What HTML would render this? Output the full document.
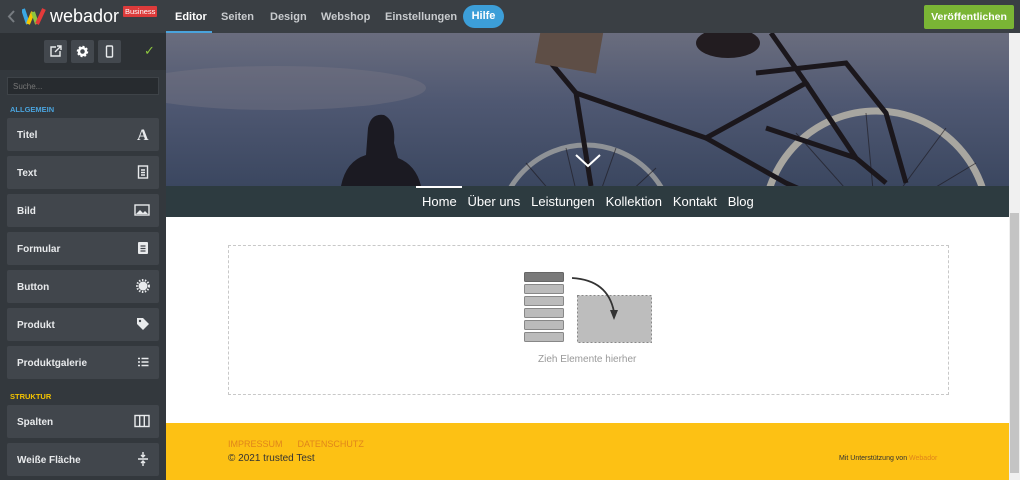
<!DOCTYPE html>
<html><head><meta charset="utf-8"><style>
*{margin:0;padding:0;box-sizing:border-box}
body{width:1020px;height:480px;overflow:hidden;font-family:"Liberation Sans",sans-serif;background:#fff;position:relative}
.top{position:absolute;left:0;top:0;width:1020px;height:33px;background:#3a3f44}
.top .nav{position:absolute;top:11px;font-size:11px;font-weight:bold;color:#c8cbce}
.side{position:absolute;left:0;top:33px;width:166px;height:447px;background:#33383d}
.tool{position:absolute;left:0;top:0;width:166px;height:37px;background:#2d3135}
.tb{position:absolute;top:7px;width:23px;height:23px;background:#43484e;border-radius:2px}
.item{position:absolute;left:7px;width:152px;height:33px;background:#41464c;border-radius:2px;font-size:10px;font-weight:bold;padding:12px 0 0 10px;color:#e8eaec}
.item svg{position:absolute;right:9px;top:9px}
.hdr{position:absolute;left:10px;font-size:7.5px;font-weight:bold}
.ic{fill:none;stroke:#e8eaec;stroke-width:1.4}
</style></head><body>
<div class="top">
<svg style="position:absolute;left:7px;top:10px" width="10" height="13"><path d="M7 1L2 6.5L7 12" stroke="#777c81" stroke-width="2" fill="none"/></svg>
<svg style="position:absolute;left:22px;top:8px" width="24" height="17"><path d="M1 1L6 16" stroke="#3aa7e3" stroke-width="4"/><path d="M6 16L11 4" stroke="#f5c400" stroke-width="4"/><path d="M11 4L15 16" stroke="#8bc53f" stroke-width="4"/><path d="M15 16L22 1" stroke="#e33a3a" stroke-width="4"/></svg>
<div style="position:absolute;left:50px;top:6px;font-size:18px;color:#fff">webador</div>
<div style="position:absolute;left:123px;top:6px;background:#dd3b3b;color:#fff;font-size:7.5px;padding:1px 2px;border-radius:1px">Business</div>
<div class="nav" style="left:175px;color:#fff">Editor</div>
<div style="position:absolute;left:166px;top:31px;width:46px;height:2px;background:#4aa3dc"></div>
<div class="nav" style="left:221px">Seiten</div>
<div class="nav" style="left:270px">Design</div>
<div class="nav" style="left:321px">Webshop</div>
<div class="nav" style="left:385px">Einstellungen</div>
<div style="position:absolute;left:463px;top:5px;width:41px;height:23px;border-radius:12px;background:#3c9ed8;color:#fff;font-size:11px;font-weight:bold;text-align:center;line-height:23px">Hilfe</div>
<div style="position:absolute;left:924px;top:5px;width:90px;height:24px;background:#7ab535;border-radius:2px;color:#fff;font-size:10.5px;font-weight:bold;text-align:center;line-height:24px">Veröffentlichen</div>
</div>
<div class="side">
<div class="tool">
<div class="tb" style="left:44px"><svg width="23" height="23"><path class="ic" d="M12 7H7v9h9v-5M11 12l6-6M13 6h4v4"/></svg></div>
<div class="tb" style="left:71px"><svg width="23" height="23"><circle cx="11.5" cy="11.5" r="3.5" fill="none" stroke="#fff" stroke-width="2.5"/><circle cx="11.5" cy="11.5" r="5" fill="none" stroke="#fff" stroke-width="1.5" stroke-dasharray="2 1.9"/></svg></div>
<div class="tb" style="left:98px"><svg width="23" height="23"><rect x="8.5" y="6" width="6" height="11" rx="1" class="ic"/></svg></div>
<div style="position:absolute;left:144px;top:10px;color:#8dc63f;font-size:13px">✓</div>
</div>
<div style="position:absolute;left:7px;top:44px;width:152px;height:18px;background:#272b2f;border:1px solid #3e4348;color:#777;font-size:8px;padding:4px 5px">Suche...</div>
<div class="hdr" style="top:72px;color:#4aa3dc">ALLGEMEIN</div>
<div class="item" style="top:85px">Titel<svg width="14" height="14"><text x="1" y="13" font-family="Liberation Serif" font-weight="bold" font-size="16" fill="#e8eaec">A</text></svg></div>
<div class="item" style="top:123px">Text<svg width="14" height="14"><rect x="2.5" y="1" width="9" height="12" class="ic"/><path class="ic" d="M5 5h4M5 7.5h4M5 10h4"/></svg></div>
<div class="item" style="top:161px">Bild<svg width="16" height="14"><rect x="1" y="2" width="14" height="10" class="ic"/><path d="M2 11l4-4 3 3 2-2 3 3z" fill="#e8eaec"/></svg></div>
<div class="item" style="top:199px">Formular<svg width="14" height="14"><rect x="2" y="1" width="10" height="12" rx="1" fill="#e8eaec"/><path d="M4.5 5h5M4.5 7.5h5M4.5 10h5" stroke="#41464c" stroke-width="1.2"/></svg></div>
<div class="item" style="top:237px">Button<svg width="14" height="14"><circle cx="7" cy="7" r="4.5" fill="#e8eaec"/><circle cx="7" cy="7" r="6" fill="none" stroke="#e8eaec" stroke-width="2" stroke-dasharray="1.5 1.5"/></svg></div>
<div class="item" style="top:275px">Produkt<svg width="14" height="14"><path d="M1 1h6l6 6-6 6-6-6z" fill="#e8eaec"/><circle cx="4" cy="4" r="1.2" fill="#41464c"/></svg></div>
<div class="item" style="top:313px">Produktgalerie<svg width="14" height="14"><path d="M2 3.5h2M2 7h2M2 10.5h2M5.5 3.5h7M5.5 7h7M5.5 10.5h7" stroke="#e8eaec" stroke-width="1.6"/></svg></div>
<div class="hdr" style="top:359px;color:#f5c400">STRUKTUR</div>
<div class="item" style="top:372px">Spalten<svg width="16" height="14"><rect x="1" y="1.5" width="14" height="11" class="ic"/><path class="ic" d="M5.7 1.5v11M10.3 1.5v11"/></svg></div>
<div class="item" style="top:410px">Weiße Fläche<svg width="14" height="14"><path d="M2 7h10M7 0v5M7 9v5M5 3l2 2 2-2M5 11l2-2 2 2" class="ic"/></svg></div>
</div>
<div style="position:absolute;left:166px;top:33px;width:843px;height:153px;overflow:hidden;background:linear-gradient(180deg,#6a6d7e 0%,#4f5872 45%,#3b4760 100%)">
<svg width="843" height="153">
<ellipse cx="110" cy="55" rx="150" ry="22" fill="#7d7a88" opacity=".35"/>
<path d="M175 153 Q180 128 200 122 L202 95 Q205 80 218 82 Q230 88 228 110 L232 125 Q250 132 255 153Z" fill="#1b1a22"/>
<circle cx="420" cy="200" r="88" fill="none" stroke="#8f9296" stroke-width="5"/>
<circle cx="710" cy="190" r="112" fill="none" stroke="#a8a6a0" stroke-width="7"/>
<g stroke="#1b171c" stroke-width="5" fill="none">
<path d="M385 30 L410 60 L425 153"/>
<path d="M410 60 L540 105 L640 50 L605 0"/>
<path d="M540 105 L620 150 L710 190"/>
<path d="M640 50 L690 125 L720 150"/>
<path d="M600 95 L690 125"/>
<path d="M590 40 L680 30 L720 80 L740 150"/>
</g>
<g stroke="#1b171c" stroke-width="1" opacity=".6">
<path d="M420 200 L360 130 M420 200 L400 115 M420 200 L450 115 M420 200 L490 135"/>
<path d="M710 190 L630 100 M710 190 L700 80 M710 190 L780 95 M710 190 L810 130"/>
</g>
<rect x="372" y="-10" width="62" height="45" fill="#5e4e46" transform="rotate(10 400 15)"/>
<ellipse cx="562" cy="10" rx="32" ry="15" fill="#221c20"/>
<path d="M410 122 L422 133 L434 122" stroke="#fff" stroke-width="2" fill="none"/>
</svg></div>
<div style="position:absolute;left:166px;top:186px;width:843px;height:31px;background:#2d3b40">
<div style="position:absolute;left:250px;top:0;width:46px;height:2px;background:#fff"></div>
<div style="position:absolute;left:256px;top:8px;color:#fff;font-size:13px"><span>Home</span>&nbsp;&nbsp;&nbsp;<span>Über uns</span>&nbsp;&nbsp;&nbsp;<span>Leistungen</span>&nbsp;&nbsp;&nbsp;<span>Kollektion</span>&nbsp;&nbsp;&nbsp;<span>Kontakt</span>&nbsp;&nbsp;&nbsp;<span>Blog</span></div>
</div>
<div style="position:absolute;left:1009px;top:33px;width:11px;height:447px;background:#f0f0f0"><div style="position:absolute;left:1px;top:180px;width:9px;height:260px;background:#c4c4c4"></div></div>
<div style="position:absolute;left:228px;top:245px;width:721px;height:150px;border:1px dashed #c8c8c8"></div>
<svg style="position:absolute;left:520px;top:268px" width="140" height="80">
<rect x="4.5" y="4.5" width="39" height="9" rx="1" fill="#7a7a7a" stroke="#666"/>
<rect x="4.5" y="16.5" width="39" height="9" rx="1" fill="#bbb" stroke="#888"/>
<rect x="4.5" y="28.5" width="39" height="9" rx="1" fill="#bbb" stroke="#888"/>
<rect x="4.5" y="40.5" width="39" height="9" rx="1" fill="#bbb" stroke="#888"/>
<rect x="4.5" y="52.5" width="39" height="9" rx="1" fill="#bbb" stroke="#888"/>
<rect x="4.5" y="64.5" width="39" height="9" rx="1" fill="#bbb" stroke="#888"/>
<rect x="57.5" y="27.5" width="74" height="47" fill="#bdbdbd" stroke="#888" stroke-dasharray="2 2"/>
<path d="M52 10 Q88 12 94 44" stroke="#333" stroke-width="1.8" fill="none"/><path d="M90 42 L94 52 L98 42Z" fill="#333"/>
</svg>
<div style="position:absolute;left:538px;top:354px;font-size:10px;color:#999">Zieh Elemente hierher</div>
<div style="position:absolute;left:166px;top:423px;width:843px;height:57px;background:#fdc114">
<div style="position:absolute;left:62px;top:16px;font-size:9px;color:#e0851b">IMPRESSUM&nbsp;&nbsp;&nbsp;&nbsp;&nbsp;&nbsp;DATENSCHUTZ</div>
<div style="position:absolute;left:62px;top:30px;font-size:10px;color:#333">© 2021 trusted Test</div>
<div style="position:absolute;left:673px;top:32px;font-size:7px;color:#333">Mit Unterstützung von <span style="color:#e0851b">Webador</span></div>
</div>
</body></html>
